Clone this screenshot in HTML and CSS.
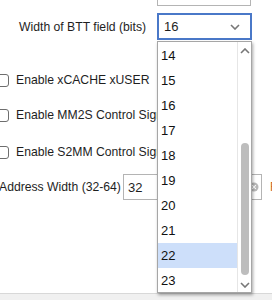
FILE: index.html
```html
<!DOCTYPE html>
<html lang="en">
<head>
    <meta charset="UTF-8">
    <title>DMA Options</title>
    <link rel="stylesheet" href="styles.css">
</head>
<body>
    <div class="form">
        <div class="row row-top">
            <div class="field-stub"></div>
        </div>
        <div class="row row-combo">
            <span class="label">Width of BTT field (bits)</span>
            <div class="combo">
                <span>16</span>
                <svg class="chev" width="10" height="6" viewBox="0 0 10 6"><path d="M1 1 L5 5 L9 1" fill="none" stroke="#777" stroke-width="1.6"/></svg>
            </div>
        </div>
        <div class="check-row first">
            <span class="check"></span>
            <span>Enable xCACHE xUSER</span>
        </div>
        <div class="check-row second">
            <span class="check"></span>
            <span>Enable MM2S Control Signals</span>
        </div>
        <div class="check-row third">
            <span class="check"></span>
            <span>Enable S2MM Control Signals</span>
        </div>
        <div class="row row-addr">
            <span class="label">Address Width (32-64)</span>
            <div class="input">
                <span>32</span>
                <svg class="clear" width="10" height="10" viewBox="0 0 10 10"><circle cx="5" cy="5" r="4.5" fill="#b8b8b8"/><path d="M3.2 3.2 L6.8 6.8 M6.8 3.2 L3.2 6.8" stroke="#fff" stroke-width="1.2"/></svg>
            </div>
            <span class="range">R</span>
        </div>
    </div>
    <div class="footer"></div>

    <!-- open popup of the BTT combo -->
    <div class="dropdown">
        <ul class="options">
            <li>14</li>
            <li>15</li>
            <li>16</li>
            <li>17</li>
            <li>18</li>
            <li>19</li>
            <li>20</li>
            <li>21</li>
            <li class="hover">22</li>
            <li>23</li>
        </ul>
        <div class="scrollbar">
            <div class="arrow up">
                <svg width="10" height="6" viewBox="0 0 10 6"><path d="M1 5 L5 1 L9 5" fill="none" stroke="#777" stroke-width="1.6"/></svg>
            </div>
            <div class="track">
                <div class="thumb"></div>
            </div>
            <div class="arrow down">
                <svg width="10" height="6" viewBox="0 0 10 6"><path d="M1 1 L5 5 L9 1" fill="none" stroke="#777" stroke-width="1.6"/></svg>
            </div>
        </div>
    </div>
</body>
</html>
```

FILE: styles.css
```css
body {
    margin: 0;
    width: 272px;
    height: 300px;
    overflow: hidden;
    position: relative;
    background-color: #ffffff;
    font-family: "Liberation Sans", Arial, sans-serif;
    font-size: 12.2px;
    color: #1e1e1e;
}
.form {
    height: 293px;
    overflow: hidden;
}
.row {
    display: flex;
    align-items: center;
    white-space: nowrap;
}
.row .label {
    flex-shrink: 0;
}
.row-top {
    margin-top: -18px;
    padding-left: 157px;
}
.field-stub {
    width: 94px;
    height: 24px;
    box-sizing: border-box;
    border: 1px solid #b4b4b4;
}
.row-combo {
    margin-top: 7px;
    padding-left: 19px;
}
.row-combo .label {
    width: 138px;
}
.combo {
    width: 95px;
    height: 27px;
    box-sizing: border-box;
    border: 2px solid #4a78c8;
    display: flex;
    align-items: center;
    justify-content: space-between;
    padding: 0 10px 0 5px;
    font-size: 13px;
}
.check-row {
    display: flex;
    align-items: center;
    width: 161px;
    height: 20px;
    margin-left: -4px;
    white-space: nowrap;
    overflow: hidden;
}
.check-row.first {
    margin-top: 30px;
}
.check-row.second {
    margin-top: 15px;
}
.check-row.third {
    margin-top: 17px;
}
.check {
    width: 13px;
    height: 13px;
    box-sizing: border-box;
    border: 1px solid #6e6e6e;
    border-radius: 3px;
    margin-right: 7px;
    flex-shrink: 0;
}
.row-addr {
    margin-top: 12px;
    margin-left: -1px;
}
.row-addr .label {
    width: 124px;
}
.input {
    width: 139px;
    height: 26px;
    box-sizing: border-box;
    border: 1px solid #b4b4b4;
    display: flex;
    align-items: center;
    justify-content: space-between;
    padding: 0 2px 0 4px;
    flex-shrink: 0;
    font-size: 13px;
}
.range {
    margin-left: 8px;
    color: #c8691e;
}
.footer {
    height: 7px;
    border-top: 1px solid #d8d8d8;
    background-color: #f0f0f0;
}
.dropdown {
    position: absolute;
    left: 157px;
    top: 41px;
    width: 95px;
    height: 252px;
    box-sizing: border-box;
    border: 1px solid #a6a6a6;
    background-color: #ffffff;
    box-shadow: 1px 2px 3px rgba(0,0,0,0.35);
    display: flex;
}
.options {
    list-style: none;
    margin: 0;
    padding: 1px 0 0 0;
    flex: 1;
}
.options li {
    height: 25px;
    line-height: 25px;
    padding-left: 3px;
    font-size: 13px;
    color: #111111;
}
.options li.hover {
    background-color: #cddffa;
}
.scrollbar {
    width: 13px;
    border-left: 1px solid #e6e6e6;
    display: flex;
    flex-direction: column;
}
.arrow {
    display: flex;
    justify-content: center;
}
.arrow.up {
    height: 18px;
    align-items: center;
}
.arrow.down {
    height: 14px;
    align-items: center;
}
.track {
    flex: 1;
    display: flex;
    justify-content: center;
}
.thumb {
    width: 8px;
    height: 132px;
    margin-top: 83px;
    border-radius: 4px;
    background-color: #bdbdbd;
}
```
